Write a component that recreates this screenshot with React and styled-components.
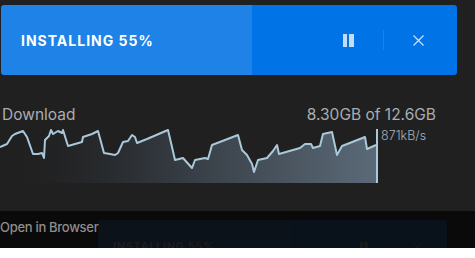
import React from "react"
import styled, { createGlobalStyle } from "styled-components"

const GlobalStyle = createGlobalStyle`
  html, body {
    margin: 0;
    padding: 0;
    background: #ffffff;
    font-family: Inter, "Noto Sans", "Liberation Sans", sans-serif;
  }
`

const progress = 55

// sparkline points, x 0..376 and y 0..55 (top of chart is y=126 on page)
const points = [
  [0, 19], [7, 16], [12, 8], [15, 6], [23, 3], [27, 9], [33, 26], [38, 26],
  [42, 25], [44, 30], [45, 12], [49, 8], [51, 2], [53, 6], [58, 3], [62, 5],
  [63, 2], [68, 18], [82, 14], [83, 9], [92, 6], [98, 3], [104, 25], [110, 26],
  [115, 27], [118, 25], [123, 14], [128, 13], [132, 7], [135, 9], [137, 15],
  [147, 11], [168, 2], [172, 19], [175, 32], [183, 30], [192, 40], [195, 32],
  [205, 30], [208, 31], [212, 17], [238, 7], [242, 22], [247, 27], [252, 36],
  [254, 44], [258, 32], [267, 30], [273, 23], [277, 17], [279, 26], [300, 20],
  [305, 16], [311, 16], [313, 20], [320, 18], [323, 6], [332, 4], [337, 27],
  [342, 18], [365, 9], [367, 21], [376, 17],
]

const Page = styled.div`
  width: 475px;
  height: 248px;
  display: flex;
  flex-direction: column;
  background: #202020;
  overflow: hidden;
`

const Top = styled.div`
  padding: 5px 18px 0 1px;
`

const Bar = styled.div`
  height: 70px;
  display: flex;
  align-items: center;
  padding-right: 5px;
  border-radius: 3px;
  background: linear-gradient(
    to right,
    #1e82e6 ${(p) => p.$progress}%,
    #0073e6 ${(p) => p.$progress}%
  );
  zoom: ${(p) => (p.$small ? 0.765 : 1)};
`

const BarTitle = styled.div`
  flex: 1;
  padding-left: 20px;
  color: #ffffff;
  font-size: 14px;
  font-weight: 700;
  letter-spacing: 1px;
`

const PauseIcon = styled.div`
  display: flex;
  gap: 2px;
  margin-right: 29px;

  span {
    display: block;
    width: 4px;
    height: 13px;
    background: #c6dcf5;
  }
  span + span {
    width: 5px;
  }
`

const Divider = styled.div`
  width: 1px;
  height: 20px;
  background: #1b82ea;
`

const CloseButton = styled.div`
  width: 68px;
  display: flex;
  justify-content: center;
`

const Stats = styled.div`
  padding: 30px 0 0 2px;
  display: flex;
  justify-content: space-between;
  width: 434px;
  color: #a9adb2;
  font-size: 15.5px;
  line-height: 20px;
`

const ChartRow = styled.div`
  display: flex;
  align-items: flex-start;
  margin-top: 1px;
`

const Rate = styled.div`
  margin-left: 3px;
  margin-top: 2px;
  color: #a6b3c0;
  font-size: 12.5px;
  font-weight: 300;
`

const Footer = styled.div`
  flex: 1;
  margin-top: 28px;
  background: #0a0a0a;
  display: flex;
  align-items: flex-start;
  overflow: hidden;
`

const BrowserLink = styled.div`
  margin-top: 8px;
  color: #8d8d8d;
  font-size: 13px;
  font-weight: 500;
  letter-spacing: -0.3px;
  white-space: nowrap;
  width: 98px;
`

const Ghost = styled.div`
  width: 349px;
  margin-top: 9px;
  opacity: 0.09;
  filter: brightness(0.8);
`

const InstallBar = ({ small }) => (
  <Bar $progress={progress} $small={small}>
    <BarTitle>INSTALLING {progress}%</BarTitle>
    <PauseIcon>
      <span />
      <span />
    </PauseIcon>
    <Divider />
    <CloseButton>
      <svg width="11" height="11" viewBox="0 0 11 11">
        <path
          d="M0.5 0.5 L10.5 10.5 M10.5 0.5 L0.5 10.5"
          stroke="#d0e2f6"
          strokeWidth="1.2"
          fill="none"
        />
      </svg>
    </CloseButton>
  </Bar>
)

const Sparkline = () => {
  const line = points.map(([x, y]) => `${x},${y + 2}`).join(" ")
  const area = `0,57 ${line} 376,57`
  return (
    <svg width="378" height="57" viewBox="0 0 378 57">
      <defs>
        <linearGradient id="fill" x1="0" y1="0" x2="1" y2="0">
          <stop offset="0" stopColor="#202020" stopOpacity="0" />
          <stop offset="0.35" stopColor="#2c3035" />
          <stop offset="1" stopColor="#5b6a78" />
        </linearGradient>
      </defs>
      <polygon points={area} fill="url(#fill)" />
      <polyline
        points={line}
        fill="none"
        stroke="#a9c9da"
        strokeWidth="2"
        strokeLinejoin="round"
      />
      <line x1="377" y1="3" x2="377" y2="57" stroke="#a9c9da" strokeWidth="2" />
    </svg>
  )
}

const App = () => {
  return (
    <>
      <GlobalStyle />
      <Page>
        <Top>
          <InstallBar />
        </Top>
        <Stats>
          <span>Download</span>
          <span>8.30GB of 12.6GB</span>
        </Stats>
        <ChartRow>
          <Sparkline />
          <Rate>871kB/s</Rate>
        </ChartRow>
        <Footer>
          <BrowserLink>Open in Browser</BrowserLink>
          <Ghost>
            <InstallBar small />
          </Ghost>
        </Footer>
      </Page>
    </>
  )
}

export default App
